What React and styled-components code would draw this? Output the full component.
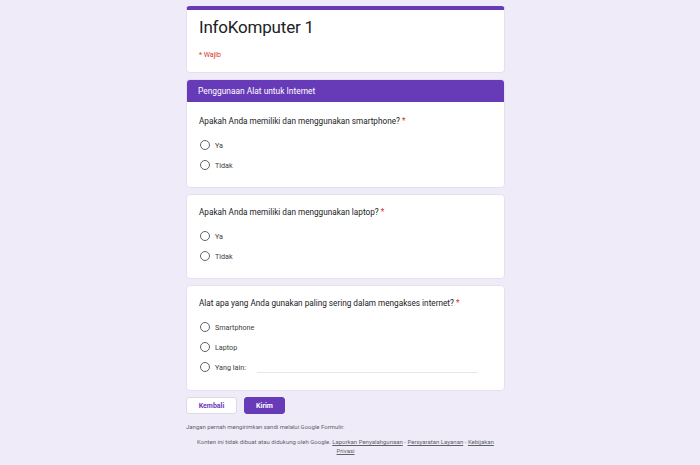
import React from "react";
import styled, { createGlobalStyle } from "styled-components";

const Global = createGlobalStyle`
  html, body { margin: 0; padding: 0; background: #f0ebf8; }
  body { font-family: Roboto, "Noto Sans", Arial, sans-serif; color: #202124; }
  * { box-sizing: border-box; }
`;

const Page = styled.div`
  width: 700px;
  height: 465px;
  overflow: hidden;
  display: flex;
  justify-content: center;
  padding: 6px 9px 0 0;
`;

const Column = styled.div`
  width: 319px;
  display: flex;
  flex-direction: column;
`;

const Card = styled.div`
  background: #fff;
  border-radius: 4px;
  border: 1px solid #e6e0ee;
  margin-bottom: 6px;
  overflow: hidden;
  border-top: ${(p) => (p.$accent ? "4px solid #673ab7" : "1px solid #e6e0ee")};
`;

const TitleBody = styled.div`
  padding: 5px 12px 12px;
`;

const Title = styled.div`
  font-family: Roboto, sans-serif;
  font-size: 17px;
  line-height: 24px;
  letter-spacing: -0.2px;
  color: #202124;
`;

const Required = styled.div`
  margin-top: 11px;
  font-size: 7px;
  line-height: 10px;
  color: #d93025;
`;

const SectionHeader = styled.div`
  height: 23px;
  background: #673ab7;
  color: #fff;
  display: flex;
  align-items: center;
  padding: 0 12px;
  font-size: 8.4px;
  margin: -1px -1px 0;
`;

const QBody = styled.div`
  padding: ${(p) => (p.$first ? "13px" : "11px")} 12px ${(p) => (p.$tall ? "13px" : "12px")};
`;

const Question = styled.div`
  font-size: 8.2px;
  line-height: 12px;
  margin-bottom: 8px;
  color: #202124;
`;

const Star = styled.span`
  color: #d93025;
`;

const Option = styled.div`
  height: 20px;
  display: flex;
  align-items: center;
  gap: 5px;
  padding-left: 1px;
  font-size: 7.2px;
  color: #3c4043;
`;

const Radio = styled.span`
  width: 10px;
  height: 10px;
  border-radius: 50%;
  border: 1.3px solid #5f6368;
  flex: none;
`;

const OtherLine = styled.span`
  flex: 1;
  height: 10px;
  margin: 6px 14px 0 6px;
  border-bottom: 1px solid #e6e6e6;
  align-self: flex-start;
`;

const Buttons = styled.div`
  display: flex;
  gap: 7px;
`;

const Button = styled.div`
  height: 17px;
  width: ${(p) => p.$w}px;
  border-radius: 3px;
  display: flex;
  align-items: center;
  justify-content: center;
  font-size: 7px;
  font-weight: 700;
  background: ${(p) => (p.$primary ? "#673ab7" : "#fff")};
  color: ${(p) => (p.$primary ? "#fff" : "#673ab7")};
  border: 1px solid ${(p) => (p.$primary ? "#673ab7" : "#dadce0")};
`;

const Note = styled.div`
  margin-top: 8px;
  font-size: 6px;
  line-height: 9px;
  color: #5f6368;
`;

const Footer = styled.div`
  margin-top: 7px;
  padding: 0 10px;
  text-align: center;
  font-size: 6px;
  line-height: 8.5px;
  color: #5f6368;
`;

const Link = styled.a`
  color: inherit;
  text-decoration: underline;
`;

const questions = [
  { q: "Apakah Anda memiliki dan menggunakan smartphone?", opts: ["Ya", "Tidak"] },
  { q: "Apakah Anda memiliki dan menggunakan laptop?", opts: ["Ya", "Tidak"] },
  {
    q: "Alat apa yang Anda gunakan paling sering dalam mengakses internet?",
    opts: ["Smartphone", "Laptop"],
    other: true,
  },
];

function QuestionBlock({ item, first }) {
  return (
    <QBody $first={first} $tall={item.other}>
      <Question>
        {item.q} <Star>*</Star>
      </Question>
      {item.opts.map((o) => (
        <Option key={o}>
          <Radio />
          {o}
        </Option>
      ))}
      {item.other && (
        <Option>
          <Radio />
          Yang lain:
          <OtherLine />
        </Option>
      )}
    </QBody>
  );
}

export default function App() {
  return (
    <>
      <Global />
      <Page>
        <Column>
          <Card $accent>
            <TitleBody>
              <Title>InfoKomputer 1</Title>
              <Required>* Wajib</Required>
            </TitleBody>
          </Card>
          <Card>
            <SectionHeader>Penggunaan Alat untuk Internet</SectionHeader>
            <QuestionBlock item={questions[0]} first />
          </Card>
          <Card>
            <QuestionBlock item={questions[1]} />
          </Card>
          <Card>
            <QuestionBlock item={questions[2]} />
          </Card>
          <Buttons>
            <Button $w={51}>Kembali</Button>
            <Button $w={41} $primary>Kirim</Button>
          </Buttons>
          <Note>Jangan pernah mengirimkan sandi melalui Google Formulir.</Note>
          <Footer>
            Konten ini tidak dibuat atau didukung oleh Google. <Link>Laporkan Penyalahgunaan</Link> -{" "}
            <Link>Persyaratan Layanan</Link> - <Link>Kebijakan</Link> <Link>Privasi</Link>
          </Footer>
        </Column>
      </Page>
    </>
  );
}
